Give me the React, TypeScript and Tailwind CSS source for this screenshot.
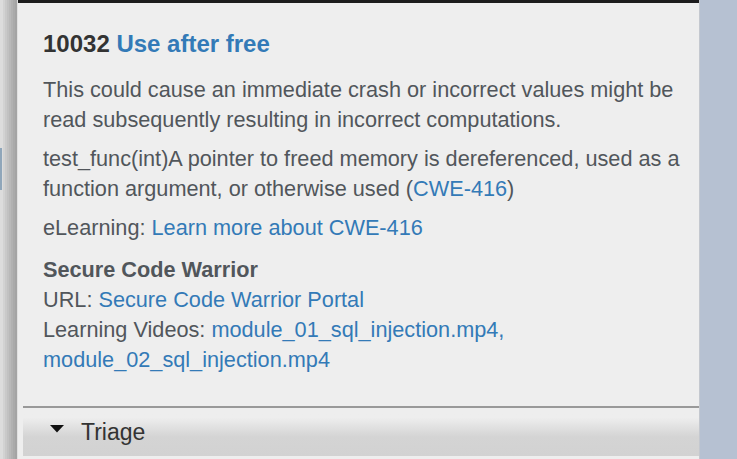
import React from "react";

const Link = ({ children }: { children: React.ReactNode }) => (
  <a href="#" className="text-[#337ab7] no-underline">
    {children}
  </a>
);

export default function App() {
  return (
    <div
      className="flex w-[737px] h-[459px] overflow-hidden bg-[#eeeeee]"
      style={{ fontFamily: '"Liberation Sans", Arial, Helvetica, sans-serif' }}
    >
      {/* left splitter strip */}
      <div className="relative flex w-[18px] min-w-[18px] h-[459px] shrink-0">
        <div className="w-[3px] min-w-[3px] h-full bg-[#dcdcdc]" />
        <div className="w-[2px] min-w-[2px] h-full bg-[#d2d2d2]" />
        <div className="w-[2px] min-w-[2px] h-full bg-[#c9c9c9]" />
        <div className="w-[2px] min-w-[2px] h-full bg-[#c1c1c1]" />
        <div className="w-[2px] min-w-[2px] h-full bg-[#b9b9b9]" />
        <div className="w-[2px] min-w-[2px] h-full bg-[#b1b1b1]" />
        <div className="w-[2px] min-w-[2px] h-full bg-[#aaaaaa]" />
        <div className="w-[2px] min-w-[2px] h-full bg-[#a4a4a4]" />
        <div className="w-[1px] min-w-[1px] h-full bg-[#e0e0e0]" />
        <div className="absolute left-0 top-[148px] w-[2px] h-[42px] bg-[#8fa6ba]" />
      </div>

      {/* main column */}
      <div className="flex flex-col flex-1 min-w-0 h-full">
        <div className="h-[3px] bg-[#1c1c1c] shrink-0" />
        <div className="px-[25px] pt-[28px] text-[21.7px] leading-[30px] text-[#51565b] whitespace-nowrap">
          <h2 className="text-[24px] leading-[26px] font-bold text-[#333333]">
            10032 <Link>Use after free</Link>
          </h2>
          <p className="mt-[18px]">
            This could cause an immediate crash or incorrect values might be
            <br />
            read subsequently resulting in incorrect computations.
          </p>
          <p className="mt-[9px]">
            test_func(int)A pointer to freed memory is dereferenced, used as a
            <br />
            function argument, or otherwise used (<Link>CWE-416</Link>)
          </p>
          <p className="mt-[9px]">
            eLearning: <Link>Learn more about CWE-416</Link>
          </p>
          <div className="mt-[12px]">
            <div className="font-bold">Secure Code Warrior</div>
            <div>
              URL: <Link>Secure Code Warrior Portal</Link>
            </div>
            <div>
              Learning Videos: <Link>module_01_sql_injection.mp4,</Link>
              <br />
              <Link>module_02_sql_injection.mp4</Link>
            </div>
          </div>
        </div>

        <div className="mt-auto ml-[5px] border-t-2 border-[#999999] shrink-0">
          <div className="h-[48px] flex items-center bg-linear-to-b from-[#eeeeee] from-20% via-[#d4d4d4] via-60% to-[#d2d2d2]">
            <svg width="14" height="8" viewBox="0 0 14 8" className="ml-[27px] mb-[6px]">
              <polygon points="0,0 14,0 7,7.5" fill="#111111" />
            </svg>
            <span className="ml-[17px] text-[23px] text-[#333333] leading-none">Triage</span>
          </div>
          <div className="h-[3px] bg-[#eeeeee]" />
        </div>
      </div>

      {/* right strip */}
      <div className="w-[38px] h-full shrink-0 border-l border-[#c4c8cf] bg-[#b6c1d2]" />
    </div>
  );
}
